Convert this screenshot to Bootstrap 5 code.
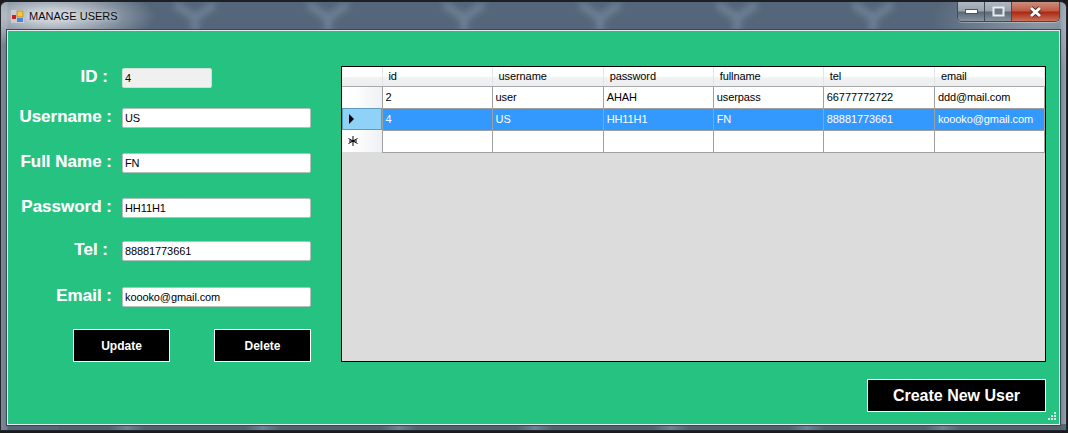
<!DOCTYPE html>
<html lang="en">
<head>
<meta charset="utf-8">
<title>MANAGE USERS</title>
<link href="https://cdn.jsdelivr.net/npm/bootstrap@5.3.0/dist/css/bootstrap.min.css" rel="stylesheet">
<style>
html,body{margin:0;height:433px;overflow:hidden;background:#1a1a1a;font-family:"Liberation Sans",Arial,sans-serif}
.win-frame{position:relative;height:431px;width:1067px;border:1px solid #23272d;border-top:2px solid #1c1f24;border-radius:7px 7px 0 0;padding:0 6px 6px;
 background:radial-gradient(ellipse 105px 32px at 50px 14px,rgba(225,229,233,.8) 20%,rgba(225,229,233,0) 100%),
 radial-gradient(ellipse 110px 50px at 1040px 18px,rgba(190,198,206,.55),rgba(190,198,206,0) 100%),
 repeating-linear-gradient(90deg,#51626f 0,#51626f 50px,#6d8297 68px,#51626f 86px,#51626f 136px) 58px 100%/100% 6px no-repeat,
 linear-gradient(90deg,#7d8995 0,#6d7c8b 6px,#55667a 7px,#55667a 1058px,#828e9a 1061px,#94a0ab 100%)}
.y-deco{position:absolute;left:0;top:0;width:1060px;height:28px;pointer-events:none}
.win-title{position:relative;height:28px;color:#0b0b0b;font-size:11px}
.win-title-text{text-shadow:0 0 5px rgba(255,255,255,.8)}
.win-ctrls{height:20px;border:1px solid #404b58;border-top:0;border-radius:0 0 5px 5px;overflow:hidden;width:103px;box-shadow:0 1px 0 rgba(255,255,255,.3)}
.win-ctrl{height:100%;border-right:1px solid #404b58;background:linear-gradient(#b0b9c2 0,#98a3ae 46%,#5c6a77 54%,#87939f 100%)}
.w-min{width:28px}.w-max{width:27px}
.w-close{width:48px;border-right:0;background:linear-gradient(#c9907f 0,#c25a43 46%,#a92a13 54%,#cc6f57 100%)}
.client{position:relative;width:1053px;height:395px;background:#26c281;border:1px solid #e6e9ec;outline:1px solid #3b4755}
.side{width:333px;padding-top:37px}
.f-row{height:20px}
.f-label{width:114px;color:#fff;font-weight:700;font-size:17px;line-height:20px;padding-bottom:2px;white-space:nowrap;text-shadow:0 0 1px rgba(255,255,255,.3)}
.f-input{width:189px;height:20px;background:#fff;border:1px solid #b4c0bb;border-radius:2px;padding:0 2px;font-size:11px;letter-spacing:-.1px;line-height:18px;color:#000;font-family:"Liberation Sans",Arial,sans-serif;outline:0}
.f-input[readonly]{width:90px;background:#f0f0f0;border-color:#cfe0d8}
.lbl-id{padding-right:14px}.lbl-u{padding-right:10px}.lbl-tel{padding-right:14px}.lbl-mail{padding-right:10px}
.r2{margin-top:20px}.r3,.r4{margin-top:25px}.r5{margin-top:23px}.r6{margin-top:26px}
.act-row{margin-top:22px;padding-left:65px;gap:44px}
.act-btn{width:97px;height:33px;background:#000;color:#fff;border:1px solid #fff;border-radius:0;font-weight:700;font-size:12px;padding:0}
.act-btn:hover{background:#000;color:#fff}
.grid-wrap{width:705px;height:296px;margin-top:35px;background:#dcdcdc;border:1px solid #000}
.dg{table-layout:fixed;border-collapse:collapse;width:703px;font-size:11px;letter-spacing:-.1px;color:#000;margin:0}
.dg th{height:19px;font-weight:400;padding:0 0 0 6px;line-height:18px;border-right:1px solid #e2e4e7;border-bottom:1px solid #a9a9a9;background:linear-gradient(#fff 0,#fff 45%,#f0f1f3 60%,#eceef0 100%);white-space:nowrap}
.dg td{height:22px;padding:0 3px;background:#fff;border:1px solid #a0a0a0;line-height:20px;white-space:nowrap;overflow:hidden}
.dg tr.sel td{background:#3399ff;color:#fff}
.dg td.rh,.dg tr.sel td.rh{padding:0;border:0;border-right:1px solid #a0a0a0;background:linear-gradient(90deg,#fff 30%,#eef0f3 100%)}
.dg tr.sel td.rh{background:#8ed2f7;box-shadow:inset 0 0 0 1px #5d9cc0}
.rh-w{width:40px}.c1,.c3,.c4,.c6{width:110px}.c2,.c5{width:111px}
.new-btn{width:179px;height:33px;margin-top:17px;margin-left:859px;background:#000;color:#fff;border:1px solid #fff;border-radius:0;font-weight:700;font-size:16px;padding:0;display:block}
.new-btn:hover{background:#000;color:#fff}
.grip{position:absolute;right:2px;bottom:2px}
</style>
</head>
<body>
<div class="win-frame">
  <svg class="y-deco" viewBox="0 0 1060 28"><defs><filter id="bl" x="-30%" y="-30%" width="160%" height="160%"><feGaussianBlur stdDeviation="3"/></filter></defs>
    <g fill="none" stroke="#7c91a6" stroke-width="8" filter="url(#bl)" opacity=".6">
      <path d="M174 2L194 16V30M214 2L194 16"/><path d="M307 2L327 16V30M347 2L327 16"/>
      <path d="M443 2L463 16V30M483 2L463 16"/><path d="M579 2L599 16V30M619 2L599 16"/>
      <path d="M716 2L736 16V30M756 2L736 16"/><path d="M852 2L872 16V30M892 2L872 16"/>
    </g>
  </svg>
  <div class="win-title d-flex align-items-center">
    <svg width="15" height="15" viewBox="0 0 15 15" class="me-1" style="margin-left:3px"><rect x="1" y="1" width="13" height="13" fill="#c9cdd2"/><rect x="7" y="2" width="6" height="6" fill="#f6c73e" stroke="#a9801c" stroke-width=".7"/><rect x="2" y="6" width="4" height="4" fill="#d0221c"/><rect x="7" y="9" width="6" height="4" fill="#4a86d8"/></svg>
    <span class="win-title-text">MANAGE USERS</span>
    <div class="win-ctrls ms-auto d-flex align-self-start">
      <div class="win-ctrl w-min d-flex align-items-center justify-content-center"><svg width="13" height="6"><rect x=".5" y=".5" width="12" height="4" fill="#fff" stroke="#4a5560"/></svg></div>
      <div class="win-ctrl w-max d-flex align-items-center justify-content-center"><svg width="13" height="11"><rect x="1.500" y="1.500" width="10" height="8" fill="#6d7985" stroke="#e9ecef" stroke-width="2"/></svg></div>
      <div class="win-ctrl w-close d-flex align-items-center justify-content-center"><svg width="15" height="12"><path d="M3 2 12 10M12 2 3 10" stroke="#5c2a20" stroke-width="4.500"/><path d="M3 2 12 10M12 2 3 10" stroke="#fff" stroke-width="3"/></svg></div>
    </div>
  </div>
  <div class="client">
    <div class="d-flex">
      <div class="side">
        <div class="f-row d-flex align-items-center"><div class="f-label text-end lbl-id">ID :</div><input class="f-input" readonly value="4"></div>
        <div class="f-row r2 d-flex align-items-center"><div class="f-label text-end lbl-u">Username :</div><input class="f-input" value="US"></div>
        <div class="f-row r3 d-flex align-items-center"><div class="f-label text-end lbl-u">Full Name :</div><input class="f-input" value="FN"></div>
        <div class="f-row r4 d-flex align-items-center"><div class="f-label text-end lbl-u">Password :</div><input class="f-input" value="HH11H1"></div>
        <div class="f-row r5 d-flex align-items-center"><div class="f-label text-end lbl-tel">Tel :</div><input class="f-input" value="88881773661"></div>
        <div class="f-row r6 d-flex align-items-center"><div class="f-label text-end lbl-mail">Email :</div><input class="f-input" value="koooko@gmail.com"></div>
        <div class="act-row d-flex">
          <button class="btn act-btn">Update</button>
          <button class="btn act-btn">Delete</button>
        </div>
      </div>
      <div class="grid-wrap">
        <table class="dg">
          <colgroup><col class="rh-w"><col class="c1"><col class="c2"><col class="c3"><col class="c4"><col class="c5"><col class="c6"></colgroup>
          <thead><tr><th></th><th>id</th><th>username</th><th>password</th><th>fullname</th><th>tel</th><th>email</th></tr></thead>
          <tbody>
            <tr><td class="rh"></td><td>2</td><td>user</td><td>AHAH</td><td>userpass</td><td>66777772722</td><td>ddd@mail.com</td></tr>
            <tr class="sel"><td class="rh"><svg width="40" height="20" class="d-block"><path d="M7 5 12 10 7 15Z" fill="#000"/></svg></td><td>4</td><td>US</td><td>HH11H1</td><td>FN</td><td>88881773661</td><td>koooko@gmail.com</td></tr>
            <tr><td class="rh"><svg width="40" height="20" class="d-block"><path d="M11 5V15M6.500 7.500 15.500 12.500M6.500 12.500 15.500 7.500M7 10H15" stroke="#000" stroke-width="1" fill="none"/></svg></td><td></td><td></td><td></td><td></td><td></td><td></td></tr>
          </tbody>
        </table>
      </div>
    </div>
    <button class="btn new-btn">Create New User</button>
    <svg class="grip" width="10" height="10"><g fill="#d8efe5"><rect x="7" y="0" width="2" height="2"/><rect x="4" y="3" width="2" height="2"/><rect x="7" y="3" width="2" height="2"/><rect x="1" y="6" width="2" height="2"/><rect x="4" y="6" width="2" height="2"/><rect x="7" y="6" width="2" height="2"/></g></svg>
  </div>
</div>
<script src="https://cdn.jsdelivr.net/npm/bootstrap@5.3.0/dist/js/bootstrap.bundle.min.js"></script>
</body>
</html>
